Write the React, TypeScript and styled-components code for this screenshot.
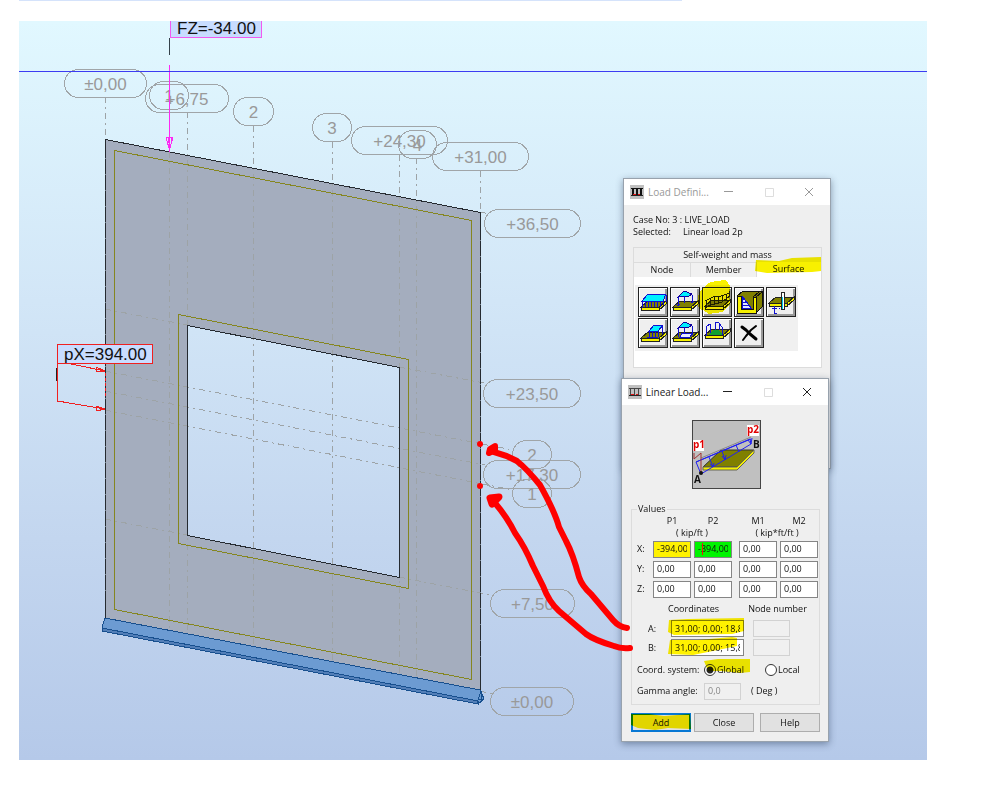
import React from "react";
import styled, { createGlobalStyle, css } from "styled-components";

const GlobalStyle = createGlobalStyle`
  * { box-sizing: border-box; }
  body { margin: 0; background: #fff; }
`;

const ui = `"Open Sans", "Noto Sans", sans-serif`;

/* ---------- page ---------- */

const Page = styled.div`
  min-height: 100vh;
  display: flex;
  flex-direction: column;
  padding: 0 66px 28px 19px;
`;
const TopRule = styled.div`
  height: 1px;
  width: 73%;
  margin-bottom: 20px;
  background: #d5e3fb;
`;
const Scene = styled.main`
  position: relative;
  flex: 1;
  min-height: 739px;
  overflow: hidden;
  background: linear-gradient(#e1f8ff 0%, #d2e6f7 38%, #c3d6ef 70%, #b5c9e9 100%);
`;
const Canvas = styled.svg`
  display: block;
  shape-rendering: crispEdges;
  text { font-family: "Liberation Sans", Arial, sans-serif; font-size: 17px; }
`;
const Annotations = styled.svg`
  position: absolute;
  left: 0;
  top: 0;
  z-index: 3;
  pointer-events: none;
`;
const Horizon = styled.div`
  position: absolute;
  left: 0;
  right: 0;
  top: 50px;
  height: 1px;
  background: #3c3cf2;
`;

/* ---------- windows ---------- */

const Window = styled.section<{ $x: number; $y: number; $h: number; $z: number }>`
  position: absolute;
  left: ${(p) => p.$x}px;
  top: ${(p) => p.$y}px;
  z-index: ${(p) => p.$z};
  width: 208px;
  min-height: ${(p) => p.$h}px;
  display: flex;
  flex-direction: column;
  border: 1px solid #98a2ad;
  background: #efefef;
  box-shadow: 0 2px 7px rgba(30, 50, 80, 0.45);
  font: 9px/12px ${ui};
  color: #111;
`;
const TitleBar = styled.header<{ $active?: boolean }>`
  height: 26px;
  display: flex;
  align-items: center;
  padding: 0 1px 0 6px;
  background: #fff;
  color: ${(p) => (p.$active ? "#222" : "#999")};
`;
const Title = styled.h1`
  flex: 1;
  margin: 0 0 0 4px;
  font: 400 10px/16px ${ui};
  white-space: nowrap;
`;
const TitleButton = styled.button<{ $faint?: boolean }>`
  width: 40px;
  height: 24px;
  display: grid;
  place-items: center;
  padding: 0;
  border: 0;
  background: none;
  color: ${(p) => (p.$faint ? "#ddd" : "inherit")};
`;
const Body = styled.div<{ $top: number }>`
  display: flex;
  flex-direction: column;
  padding: ${(p) => p.$top}px 8px 9px 9px;
`;
const Info = styled.dl`
  display: grid;
  grid-template-columns: 50px 1fr;
  margin: 0 0 9px;
  dt, dd { margin: 0; white-space: nowrap; }
`;
const Wide = styled.dt`
  grid-column: 1 / 3;
`;

const TabGroup = styled.div`
  border: 1px solid #dcdcdc;
  border-bottom: 0;
`;
const WideTab = styled.button`
  display: block;
  width: 100%;
  height: 14px;
  padding: 0;
  border: 0;
  background: none;
  font: inherit;
  color: inherit;
`;
const Tabs = styled.div`
  display: grid;
  grid-template-columns: 57px 66px 1fr;
`;
const Tab = styled.button<{ $selected?: boolean }>`
  position: relative;
  height: 15px;
  padding: 0;
  border: solid #dcdcdc;
  border-width: 1px 1px 0 0;
  background: #f1f1f1;
  font: inherit;
  color: inherit;
  ${(p) => p.$selected && css`background: #fff; border-color: #fff; line-height: 10px; padding-bottom: 3px;`}
`;
const TabPanel = styled.div`
  height: 91px;
  padding: 8px 1px;
  border: 1px solid #dcdcdc;
  border-top: 0;
  background: #fff;
`;
const ToolGrid = styled.div`
  width: 163px;
  display: grid;
  grid-template-columns: repeat(5, 30px);
  gap: 1px 2px;
  padding: 2px 3px 3px;
  background: #f0f0f0;
`;
const Tool = styled.button`
  position: relative;
  width: 30px;
  height: 30px;
  padding: 0;
  border: 1px solid #222;
  background: #efefef;
  box-shadow: inset 1px 1px #fff, inset -2px -2px #999;
  svg { display: block; margin: -1px; shape-rendering: crispEdges; }
`;
const Marker = styled.svg`
  position: absolute;
  overflow: visible;
  mix-blend-mode: multiply;
  pointer-events: none;
  z-index: 2;
`;

const Preview = styled.figure`
  width: 69px;
  height: 69px;
  margin: 0 auto 14px 61px;
  border: 1px solid #444;
  background: #c0c0c0;
  text { font: 700 10px ${ui}; }
`;
const Group = styled.fieldset`
  margin: 0 0 8px;
  padding: 0 3px 4px 5px;
  border: 1px solid #dcdcdc;
  min-width: 0;
`;
const Legend = styled.legend`
  padding: 0 1px;
  height: 12px;
`;
const Row = styled.div<{ $h?: number; $gap?: number }>`
  display: flex;
  align-items: center;
  gap: ${(p) => p.$gap ?? 7}px;
  height: ${(p) => p.$h ?? 20}px;
`;
const RowLabel = styled.span<{ $w: number; $indent?: number }>`
  width: ${(p) => p.$w}px;
  padding-left: ${(p) => p.$indent ?? 0}px;
  flex: none;
  white-space: nowrap;
`;
const Pair = styled.div`
  display: grid;
  grid-template-columns: 38px 38px;
  gap: 3px;
  text-align: center;
`;
const Heading = styled.div`
  width: 79px;
  text-align: center;
  white-space: nowrap;
`;
const Field = styled.span<{ $w: number }>`
  position: relative;
  display: block;
  flex: none;
  width: ${(p) => p.$w}px;
`;
const TextBox = styled.input<{ $fill?: string }>`
  display: block;
  width: 100%;
  height: 17px;
  padding: 0 3px 1px;
  border: 1px solid #858585;
  border-radius: 0;
  background: ${(p) => p.$fill ?? "#fff"};
  color: #111;
  font: 9px/14px ${ui};
  &:disabled { border-color: #d2d2d2; background: #f0f0f0; color: #888; }
`;
const Caret = styled.i`
  position: absolute;
  left: 8px;
  top: 2px;
  width: 1px;
  height: 12px;
  background: #f01010;
`;
const RadioLabel = styled.label`
  position: relative;
  display: flex;
  align-items: center;
  gap: 1px;
`;
const Radio = styled.input`
  appearance: none;
  width: 12px;
  height: 12px;
  margin: 0;
  border: 1px solid #333;
  border-radius: 50%;
  background: #fff;
  &:checked { background: radial-gradient(circle, #222 0 3px, #fff 4px); }
`;
const Actions = styled.footer`
  display: flex;
  gap: 3px;
`;
const Action = styled.button<{ $primary?: boolean }>`
  position: relative;
  width: 60px;
  height: 19px;
  padding: 0;
  border: ${(p) => (p.$primary ? "2px solid #0878d4" : "1px solid #adadad")};
  background: #e1e1e1;
  color: #111;
  font: inherit;
  &:last-child { margin-left: auto; }
`;

/* ---------- drawing data ---------- */

type Pill = [x: number, y: number, w: number, text: string];
const pills: Pill[] = [
  [64, 69, 83, "±0,00"],
  [145, 84, 84, "+6,75"],
  [149, 81, 40, "1"],
  [233, 97, 41, "2"],
  [312, 113, 40, "3"],
  [351, 126, 97, "+24,30"],
  [398, 130, 39, "4"],
  [432, 142, 97, "+31,00"],
  [484, 209, 97, "+36,50"],
  [483, 379, 98, "+23,50"],
  [512, 440, 40, "2"],
  [483, 460, 98, "+17,30"],
  [512, 479, 40, "1"],
  [490, 589, 85, "+7,50"],
  [490, 687, 84, "±0,00"],
];

const axes: number[][] = [
  [105, 97, 105, 139],
  [169, 152, 169, 630],
  [187, 112, 187, 634],
  [253, 126, 253, 646],
  [332, 142, 332, 661],
  [399, 155, 399, 674],
  [416, 158, 416, 678],
  [480, 171, 480, 212],
  [105, 309, 187, 325],
  [399, 367, 484, 383],
  [105, 371, 513, 450],
  [105, 391, 485, 465],
  [105, 410, 513, 490],
  [105, 519, 187, 535],
  [399, 577, 490, 595],
  [480, 212, 490, 214],
  [480, 691, 492, 694],
];

function Model() {
  return (
    <Canvas width="908" height="739" viewBox="19 21 908 739" role="img" aria-label="Wall panel with loads">
      <path
        d="M105 139 480 212V690L105 618ZM187 325V535L399 577V367Z"
        fill="#a4adbe"
        fillRule="evenodd"
      />
      <g stroke="#9da3a6" strokeDasharray="6 4 2 4">
        {axes.map((a, i) => (
          <line key={i} x1={a[0]} y1={a[1]} x2={a[2]} y2={a[3]} />
        ))}
      </g>
      <path d="M114.500 150.500 471.500 220.500V679.500L114.500 609.500ZM178.500 314.500 408.500 359.500V588.500L178.500 543.500Z" fill="none" stroke="#85861f" />
      <path d="M105.500 139.500 480.500 212.500V690M105.500 139.500V618M187.500 325.500 399.500 367.500V577.500L187.500 535.500Z" fill="none" stroke="#252a30" />
      <path d="M105.500 158V600M480.500 240V670" stroke="#74808c" strokeDasharray="1 15" />
      <path d="M105 618 480 690 484 699 478 704 102 631 103 624Z" fill="#6c9bd2" stroke="#174f8e" />
      <path d="M102 628 478 701V704L102 631Z" fill="#537fb8" stroke="#174f8e" />
      <path d="M481 691 477 703M481 691 484 699 478 700M481 691 482 701" fill="none" stroke="#174f8e" />

      <g>
        {pills.map(([x, y, w, text], i) => (
          <g key={i}>
            <rect x={x + 0.5} y={y + 0.5} width={w - 1} height="28" rx="14" fill="none" stroke="#a0a5a8" />
            <text x={x + w / 2} y={y + 21} textAnchor="middle" fill="#999">
              {text}
            </text>
          </g>
        ))}
      </g>

      <rect x="170.500" y="10" width="91" height="27.500" fill="#c8dcff" stroke="#f25af0" />
      <text x="177" y="34" fill="#111">FZ=-34.00</text>
      <path d="M169.500 38V55" stroke="#35424a" />
      <path d="M169.500 65V152M166 137H173L169.500 150ZM168 137V143M171 137V143" fill="none" stroke="#ff28f4" />

      <path d="M57.500 363V401L105 409M71 364 105 371M96 367 105 371 96 372ZM96 406 105 409 96 411Z" fill="none" stroke="#f02020" />
      <path d="M105.500 373V396" stroke="#f02020" strokeDasharray="3 2" />
      <path d="M56.500 368V381" stroke="#222" />
      <rect x="57.500" y="344.500" width="95" height="19" fill="#c8dcff" stroke="#f02020" />
      <text x="64" y="360" fill="#111">pX=394.00</text>
    </Canvas>
  );
}

function RedMarks() {
  return (
    <Annotations width="908" height="739" viewBox="19 21 908 739" aria-hidden="true">
      <circle cx="480" cy="444" r="3" fill="red" />
      <circle cx="480" cy="486" r="3" fill="red" />
      <g fill="none" stroke="red" strokeWidth="6" strokeLinecap="round" strokeLinejoin="round">
        <path d="M627 628Q619 627 613 620L591 594Q582 586 579 577Q573 554 566 541L559 527Q555 512 540 485Q527 469 517 461Q506 455 494 452" />
        <path d="M630 648Q621 649 614 646Q594 640 586 634L559 611Q549 602 543 586L533 566Q525 547 515 533Q507 517 495 503" />
        <path d="M495 446 490 449 489 453 495 450Z" />
        <path d="M490 498 499 497 492 504Z" strokeWidth="7" />
      </g>
    </Annotations>
  );
}

/* ---------- icons ---------- */

function AppIcon({ active }: { active?: boolean }) {
  return (
    <svg width="14" height="14" viewBox="0 0 14 14" shapeRendering="crispEdges" aria-hidden="true">
      <path d="M0 0H14V14H0Z" fill="#c0c0c0" />
      <path d="M1 3.500H13M2.500 3V10M6.500 3V10M10.500 3V10" stroke={active ? "#444" : "#111"} strokeWidth="1" fill="none" />
      {!active && <path d="M3.500 3V10M7.500 3V10M11.500 3V10" stroke="#111" />}
      <path d="M3 9.500H6M8 9.500H10" stroke="#e01010" strokeWidth={active ? 1 : 2} />
      <path d="M1 10.500H13" stroke="#222" strokeWidth="1" />
    </svg>
  );
}

const Slab = ({ y = 0 }: { y?: number }) => (
  <g transform={`translate(0 ${y})`} stroke="#222" strokeWidth="1">
    <path d="M3 20H21V23H3ZM21 20 28 14V17L21 23Z" fill="#f5f000" />
    <path d="M3 20 10 14H28L21 20Z" fill="#808000" />
  </g>
);

const toolIcons: { name: string; art: React.ReactNode }[] = [
  {
    name: "Uniform surface load",
    art: (
      <>
        <Slab />
        <path d="M4 14 10 7H28L25 14Z" fill="#00f0ff" stroke="#1010d0" />
        <path d="M4 14V21M7 14V20M10 14V20M13 14V20M16 14V20M19 14V20M22 14V20M25 14V18M28 8V15" stroke="#1010d0" />
      </>
    ),
  },
  {
    name: "Surface load by three points",
    art: (
      <>
        <Slab />
        <path d="M8 10 14 4 22 7 19 9Z" fill="#00f0ff" stroke="#109" />
        <path d="M8 10V18M14 9V16M22 8V15M6 17 8 19 10 17M20 14 22 16 24 14" fill="none" stroke="#1010d0" />
      </>
    ),
  },
  {
    name: "Linear load",
    art: (
      <>
        <Slab y={-1} />
        <path d="M3 14 11 10 19 9 28 6M3 20 12 17 20 15 28 9M4 14V21M8 12V19M12 10V18M16 10V17M20 9V15M24 7V13M27 4V9" fill="none" stroke="#222" />
      </>
    ),
  },
  {
    name: "Hydrostatic pressure",
    art: (
      <>
        <path d="M3 9 9 4H28V20L22 26H3Z" fill="#808000" stroke="#111" />
        <path d="M3 9H7V22H19V10H22V26H3Z" fill="#f5f000" stroke="#111" />
        <path d="M22 10 28 5M19 10 25 5" stroke="#111" />
        <path d="M8 9V21H17Z" fill="#dfe4ff" stroke="#1010d0" />
        <path d="M8 12H10M8 15H12M8 18H15" stroke="#1010d0" />
      </>
    ),
  },
  {
    name: "Thermal load",
    art: (
      <>
        <Slab y={-4} />
        <path d="M15 5H18V22H15Z" fill="#fff" stroke="#222" />
        <path d="M16.500 10V22" stroke="#00cfe8" />
        <path d="M8 19V26H11M6 21H11M13 21H14" stroke="#1010d0" fill="none" />
      </>
    ),
  },
  {
    name: "Surface load on contour",
    art: (
      <>
        <Slab />
        <path d="M11 13 16 7H25L20 13Z" fill="#00f0ff" stroke="#1010d0" />
        <path d="M11 13V20M14 13V19M17 13V19M20 13V19M24 8V16M9 19H20" stroke="#1010d0" />
      </>
    ),
  },
  {
    name: "Surface load by points on contour",
    art: (
      <>
        <Slab />
        <path d="M8 10 14 4 22 7 19 9Z" fill="#00f0ff" stroke="#109" />
        <path d="M10 19 12 15H23L20 19Z" fill="#e8ecff" stroke="#1010d0" />
        <path d="M8 10V19M14 9V16M22 8V16" stroke="#1010d0" />
      </>
    ),
  },
  {
    name: "Ground pressure",
    art: (
      <>
        <Slab y={-3} />
        <path d="M7 17 11 12 17 12 21 17Z" fill="#10a030" />
        <path d="M4 9V18M8 6V15M13 4V12M17 5V12M20 9V17M4 9 8 6M13 4 17 5 20 9" fill="none" stroke="#1010d0" />
      </>
    ),
  },
  {
    name: "Delete",
    art: (
      <g shapeRendering="auto" stroke="#000" strokeLinecap="round" strokeLinejoin="round">
        <path d="M8 9 12 12 16 16 22 21" strokeWidth="3" />
        <path d="M22 8 17 12 12 18 9 22" strokeWidth="2" />
      </g>
    ),
  },
];

function WindowTitle({ active, children }: { active?: boolean; children: React.ReactNode }) {
  return (
    <TitleBar $active={active}>
      <AppIcon active={active} />
      <Title>{children}</Title>
      <TitleButton aria-label="Minimize">
        <svg width="10" height="10"><path d="M0 4.500H9" stroke="currentColor" /></svg>
      </TitleButton>
      <TitleButton aria-label="Maximize" $faint disabled>
        <svg width="10" height="10"><path d="M1.500 1.500H9.500V9.500H1.500Z" fill="none" stroke="currentColor" /></svg>
      </TitleButton>
      <TitleButton aria-label="Close">
        <svg width="10" height="10"><path d="M1 1 9 9M9 1 1 9" fill="none" stroke="currentColor" /></svg>
      </TitleButton>
    </TitleBar>
  );
}

function LoadDefinition() {
  return (
    <Window $x={604} $y={157} $h={291} $z={1}>
      <WindowTitle>Load Defini...</WindowTitle>
      <Body $top={9}>
        <Info>
          <Wide>Case No: 3 : LIVE_LOAD</Wide>
          <dt>Selected:</dt>
          <dd>Linear load 2p</dd>
        </Info>
        <TabGroup>
          <WideTab>Self-weight and mass</WideTab>
          <Tabs>
            <Tab>Node</Tab>
            <Tab>Member</Tab>
            <Tab $selected>
              Surface
              <Marker width="66" height="16" style={{ left: -2, top: -6 }}>
                <path d="M1 3 24 4 37 1 66 0V14L57 15 12 16 0 14Z" fill="#f8f000" />
              </Marker>
            </Tab>
          </Tabs>
        </TabGroup>
        <TabPanel>
          <ToolGrid>
            {toolIcons.map((t, i) => (
              <Tool key={t.name} aria-label={t.name}>
                <svg width="30" height="30" viewBox="0 0 30 30" fill="none">{t.art}</svg>
                {i === 2 && (
                  <Marker width="34" height="36" style={{ left: -5, top: -7 }}>
                    <path d="M11 3 19 1 28 0 31 3 33 6V24L29 28 25 32 12 34 6 30 2 29 0 22 2 13Z" fill="#f8f000" />
                  </Marker>
                )}
              </Tool>
            ))}
          </ToolGrid>
        </TabPanel>
      </Body>
    </Window>
  );
}

const valueRows = [
  { axis: "X", cells: ["-394,00", "-394,00", "0,00", "0,00"] },
  { axis: "Y", cells: ["0,00", "0,00", "0,00", "0,00"] },
  { axis: "Z", cells: ["0,00", "0,00", "0,00", "0,00"] },
];
const columns = ["P1", "P2", "M1", "M2"];
const points = [
  { id: "A", value: "31,00; 0,00; 18,80", mark: "M1 2 20 1 76 0V13L64 16 6 17 0 14Z" },
  { id: "B", value: "31,00; 0,00; 15,80", mark: "M2 3 30 3 64 0 69 1V9L45 14 25 18 0 17Z" },
];

function LinearLoad() {
  const cell = (axis: string, value: string, c: number) => {
    const fill = axis === "X" ? ["#fff200", "#00f400"][c] : undefined;
    return (
      <Field $w={38} key={c}>
        <TextBox aria-label={`${axis} ${columns[c]}`} defaultValue={value} $fill={fill} />
        {axis === "X" && c === 1 && <Caret />}
      </Field>
    );
  };
  return (
    <Window $x={602} $y={357} $h={364} $z={2}>
      <WindowTitle active>Linear Load...</WindowTitle>
      <Body $top={15}>
        <Preview>
          <svg width="67" height="67" viewBox="0 0 67 67" aria-label="Linear load from A to B">
            <path d="M10 46 28 29H61L44 46Z" fill="#808000" stroke="#333" />
            <path d="M10 46H44L61 29V32L44 49H10Z" fill="#f5f000" stroke="#665" />
            <path d="M8 37 58 16" stroke="#888" fill="none" />
            <path d="M8 53 58 23M8 53 3 41 57 18 58 23M3 41 58 18M16 36 20 46M29 30 32 39M43 24 46 31M17 43 20 46 21 42M29 35 32 39 33 34M55 19 58 23 59 17" fill="none" stroke="#2020f0" />
            <path d="M1 38 8 32V37M1 38V32M8 37V53" fill="none" stroke="#a03030" />
            <rect x="0" y="19" width="11" height="11" fill="#fff" />
            <rect x="54" y="4" width="12" height="11" fill="#fff" />
            <circle cx="8" cy="52" r="2" fill="#111" />
            <text x="0" y="27" fill="#e00000">p1</text>
            <text x="54" y="12" fill="#e00000">p2</text>
            <text x="1" y="62" fill="#111">A</text>
            <text x="60" y="27" fill="#111">B</text>
          </svg>
        </Preview>
        <Group>
          <Legend>Values</Legend>
          <Row $h={12}>
            <RowLabel $w={9} />
            <Pair><span>P1</span><span>P2</span></Pair>
            <Pair><span>M1</span><span>M2</span></Pair>
          </Row>
          <Row $h={12}>
            <RowLabel $w={9} />
            <Heading>( kip/ft )</Heading>
            <Heading>( kip*ft/ft )</Heading>
          </Row>
          {valueRows.map((r) => (
            <Row key={r.axis}>
              <RowLabel $w={9}>{r.axis}:</RowLabel>
              <Pair>{r.cells.slice(0, 2).map((v, c) => cell(r.axis, v, c))}</Pair>
              <Pair>{r.cells.slice(2).map((v, c) => cell(r.axis, v, c + 2))}</Pair>
            </Row>
          ))}
          <Row $h={20}>
            <RowLabel $w={11} />
            <Heading>Coordinates</Heading>
            <Heading>Node number</Heading>
          </Row>
          {points.map((p) => (
            <Row key={p.id} $gap={9} $h={19}>
              <RowLabel $w={25} $indent={11} as="label" htmlFor={`point-${p.id}`}>{p.id}:</RowLabel>
              <Field $w={73}>
                <TextBox id={`point-${p.id}`} defaultValue={p.value} />
                <Marker width="76" height="17" style={{ left: -3, top: -2 }}>
                  <path d={p.mark} fill="#fff200" />
                </Marker>
              </Field>
              <Field $w={37}><TextBox aria-label={`Node number ${p.id}`} disabled /></Field>
            </Row>
          ))}
          <Row $h={25} $gap={0}>
            <RowLabel $w={67}>Coord. system:</RowLabel>
            <RowLabel $w={61}>
              <RadioLabel>
                <Radio type="radio" name="system" defaultChecked />
                Global
                <Marker width="46" height="15" style={{ left: 0, top: -5 }}>
                  <path d="M0 2 14 0H46V13L36 14 17 12 4 12Z" fill="#f8f000" />
                </Marker>
              </RadioLabel>
            </RowLabel>
            <RadioLabel><Radio type="radio" name="system" />Local</RadioLabel>
          </Row>
          <Row $h={18} $gap={0}>
            <RowLabel $w={67} as="label" htmlFor="gamma">Gamma angle:</RowLabel>
            <Field $w={37}><TextBox id="gamma" defaultValue="0,0" disabled /></Field>
            <RowLabel $w={50} $indent={10}>( Deg )</RowLabel>
          </Row>
        </Group>
        <Actions>
          <Action $primary>
            Add
            <Marker width="60" height="17" style={{ left: -2, top: -1 }}>
              <path d="M0 0 18 0 33 2 59 0 60 15 37 14 24 16 7 14 0 11Z" fill="#fff200" />
            </Marker>
          </Action>
          <Action>Close</Action>
          <Action>Help</Action>
        </Actions>
      </Body>
    </Window>
  );
}

export default function App() {
  return (
    <>
      <GlobalStyle />
      <Page>
        <TopRule />
        <Scene>
          <Model />
          <Horizon />
          <LoadDefinition />
          <LinearLoad />
          <RedMarks />
        </Scene>
      </Page>
    </>
  );
}
